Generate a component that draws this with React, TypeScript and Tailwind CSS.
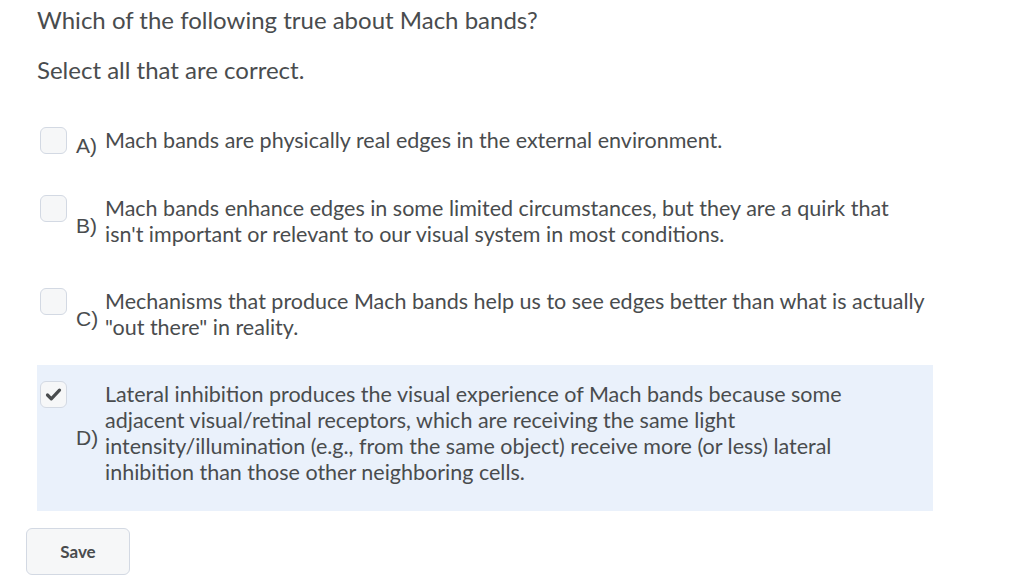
import React from "react";

const options = [
  { label: "A)", text: "Mach bands are physically real edges in the external environment.", checked: false },
  { label: "B)", text: "Mach bands enhance edges in some limited circumstances, but they are a quirk that isn't important or relevant to our visual system in most conditions.", checked: false },
  { label: "C)", text: "Mechanisms that produce Mach bands help us to see edges better than what is actually \"out there\" in reality.", checked: false },
  { label: "D)", text: "Lateral inhibition produces the visual experience of Mach bands because some adjacent visual/retinal receptors, which are receiving the same light intensity/illumination (e.g., from the same object) receive more (or less) lateral inhibition than those other neighboring cells.", checked: true },
];

function Checkbox({ checked }: { checked: boolean }) {
  return (
    <div className="w-[27px] h-[27px] shrink-0 rounded-[6px] border border-[#d3d9e3] bg-[#f6f7f8] flex items-center justify-center">
      {checked && (
        <svg width="17" height="15" viewBox="0 0 17 15">
          <path d="M2.5 8 L6.3 11.8 L14.5 3.2" fill="none" stroke="#494c4e" strokeWidth="3.2" strokeLinecap="round" strokeLinejoin="round" />
        </svg>
      )}
    </div>
  );
}

export default function App() {
  return (
    <div className="w-[1024px] h-[583px] bg-white text-[#494c4e] overflow-hidden" style={{ fontFamily: "Lato, 'Noto Sans', sans-serif" }}>
      <div className="pl-[37px] pt-[5px]">
        <p className="text-[24px] leading-[30px]">Which of the following true about Mach bands?</p>
        <p className="text-[24px] leading-[30px] mt-[20px]">Select all that are correct.</p>
      </div>
      <div className="mt-[26px] ml-[37px] w-[896px] flex flex-col">
        {options.map((o) => (
          <div key={o.label} className={`flex pt-4 pl-[3px] ${o.checked ? "bg-[#eaf1fb] pb-[26px]" : "pb-[25px]"}`}>
            <Checkbox checked={o.checked} />
            <div className="w-[38px] shrink-0 self-center translate-y-[5px] pl-[9px] text-[21px] leading-[22px]" style={{ fontFamily: "'Liberation Sans', Arial, sans-serif" }}>
              {o.label}
            </div>
            <div className="w-[820px] text-[21.5px] leading-[26px]">{o.text}</div>
          </div>
        ))}
      </div>
      <div className="ml-[26px] mt-[17px]">
        <button className="w-[104px] h-[47px] rounded-[6px] border border-[#d3d9e3] bg-[#f6f7f8] text-[17px] font-bold text-[#494c4e]">
          Save
        </button>
      </div>
    </div>
  );
}
